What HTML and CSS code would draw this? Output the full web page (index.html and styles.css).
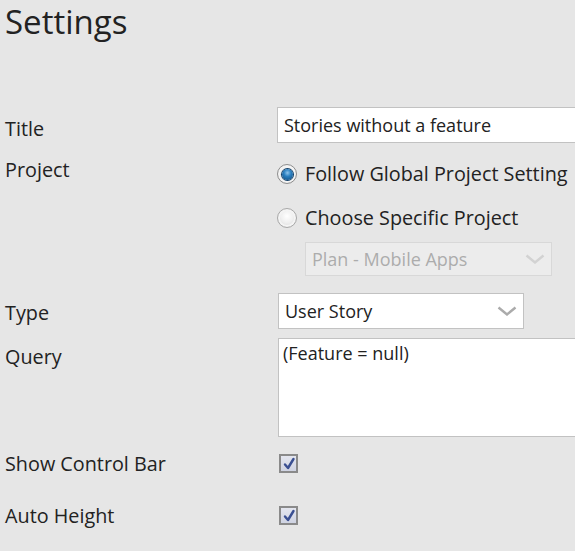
FILE: index.html
```html
<!DOCTYPE html>
<html>
<head>
<meta charset="utf-8">
<link rel="stylesheet" href="styles.css">
</head>
<body>
<h1 class="heading">Settings</h1>
<div class="form">
  <div class="row row-title">
    <div class="label">Title</div>
    <div class="control"><div class="textbox">Stories without a feature</div></div>
  </div>
  <div class="row row-project">
    <div class="label">Project</div>
    <div class="control radios">
      <div class="radio-line first"><span class="radio checked"><span class="dot"></span></span><span class="radio-text">Follow Global Project Setting</span></div>
      <div class="radio-line"><span class="radio"></span><span class="radio-text">Choose Specific Project</span></div>
      <div class="select disabled">
        <span class="select-text">Plan - Mobile Apps</span>
        <svg class="chev" width="20" height="10" viewBox="0 0 20 10"><path d="M1.5 1.5 L10 8.5 L18.5 1.5" fill="none" stroke="#d2d2d2" stroke-width="2.4"/></svg>
      </div>
    </div>
  </div>
  <div class="row row-type">
    <div class="label">Type</div>
    <div class="control">
      <div class="select">
        <span class="select-text">User Story</span>
        <svg class="chev" width="20" height="10" viewBox="0 0 20 10"><path d="M1.5 1.5 L10 8.5 L18.5 1.5" fill="none" stroke="#ababab" stroke-width="2.4"/></svg>
      </div>
    </div>
  </div>
  <div class="row row-query">
    <div class="label">Query</div>
    <div class="control"><div class="textarea">(Feature = null)</div></div>
  </div>
  <div class="row row-check">
    <div class="label">Show Control Bar</div>
    <div class="control"><span class="checkbox"><svg width="14" height="14" viewBox="0 0 14 14"><path d="M3 7.5 L6 11 L11.5 2" fill="none" stroke="#3a4f92" stroke-width="2.4" stroke-linecap="round" stroke-linejoin="round"/></svg></span></div>
  </div>
  <div class="row row-check last">
    <div class="label">Auto Height</div>
    <div class="control"><span class="checkbox"><svg width="14" height="14" viewBox="0 0 14 14"><path d="M3 7.5 L6 11 L11.5 2" fill="none" stroke="#3a4f92" stroke-width="2.4" stroke-linecap="round" stroke-linejoin="round"/></svg></span></div>
  </div>
</div>
</body>
</html>
```

FILE: styles.css
```css
html {
  overflow: hidden;
  background: #e6e6e6;
}
body {
  margin: 0;
  padding: 0 0 0 5px;
  font-family: "Open Sans", "Noto Sans", sans-serif;
  font-size: 19.8px;
  line-height: 24px;
  color: #222;
  background: #e6e6e6;
  width: 700px;
}
.heading {
  margin: 0;
  font-size: 33px;
  font-weight: 400;
  line-height: 44px;
  height: 107px;
}
.row {
  display: flex;
  align-items: flex-start;
}
.label {
  width: 272px;
  flex: none;
}
.control {
  flex: none;
}
.row-title .label {
  padding-top: 10px;
}
.textbox,
.select,
.textarea {
  font-size: 18px;
}
.textbox {
  box-sizing: border-box;
  width: 330px;
  height: 36px;
  padding: 5px 6px;
  background: #fff;
  border: 1px solid #c2c2c2;
}
.row-project {
  margin-top: 15px;
}
.radios {
  padding-top: 4px;
}
.radio-line {
  display: flex;
  align-items: center;
  height: 24px;
}
.radio-line.first {
  margin-bottom: 20px;
}
.radio {
  box-sizing: border-box;
  width: 20px;
  height: 20px;
  margin: 0 8px 0 0;
  border-radius: 50%;
  border: 1px solid #a9a9a9;
  background: radial-gradient(circle at 50% 40%, #ffffff 0%, #efefef 45%, #d2d2d2 100%);
  box-shadow: inset 0 0 0 2px #f4f4f4;
  display: flex;
  align-items: center;
  justify-content: center;
}
.radio.checked {
  border-color: #8e8e8e;
  background: radial-gradient(circle at 50% 40%, #ffffff 0%, #e8e8e8 60%, #c4c4c4 100%);
}
.dot {
  width: 11px;
  height: 11px;
  border-radius: 50%;
  background: radial-gradient(circle at 50% 35%, #8fc4ea 0%, #2a7fc0 40%, #124a7a 100%);
  box-shadow: 0 0 0 1px #0f3d66;
}
.select {
  box-sizing: border-box;
  width: 246px;
  height: 36px;
  padding: 5px 6px;
  background: #fff;
  border: 1px solid #c2c2c2;
  display: flex;
  align-items: center;
  justify-content: space-between;
  margin-left: 1px;
}
.select.disabled {
  width: 247px;
  height: 34px;
  margin-left: 28px;
  margin-top: 12px;
  background: #ececec;
  border-color: #d8d8d8;
  color: #acacac;
}
.row-type {
  margin-top: 17px;
}
.row-type .label {
  padding-top: 8px;
}
.row-query {
  margin-top: 9px;
}
.row-query .label {
  padding-top: 7px;
}
.textarea {
  box-sizing: border-box;
  width: 330px;
  height: 99px;
  margin-left: 1px;
  padding: 2px 4px;
  background: #fff;
  border: 1px solid #c2c2c2;
}
.row-check {
  margin-top: 15px;
}
.row-check.last {
  margin-top: 28px;
}
.checkbox {
  box-sizing: border-box;
  display: flex;
  align-items: center;
  justify-content: center;
  width: 19px;
  height: 19px;
  margin-top: 2px;
  margin-left: 2px;
  border: 2px solid #8a8a8a;
  background: linear-gradient(#e4e6ef, #cfd3e2);
}
```
